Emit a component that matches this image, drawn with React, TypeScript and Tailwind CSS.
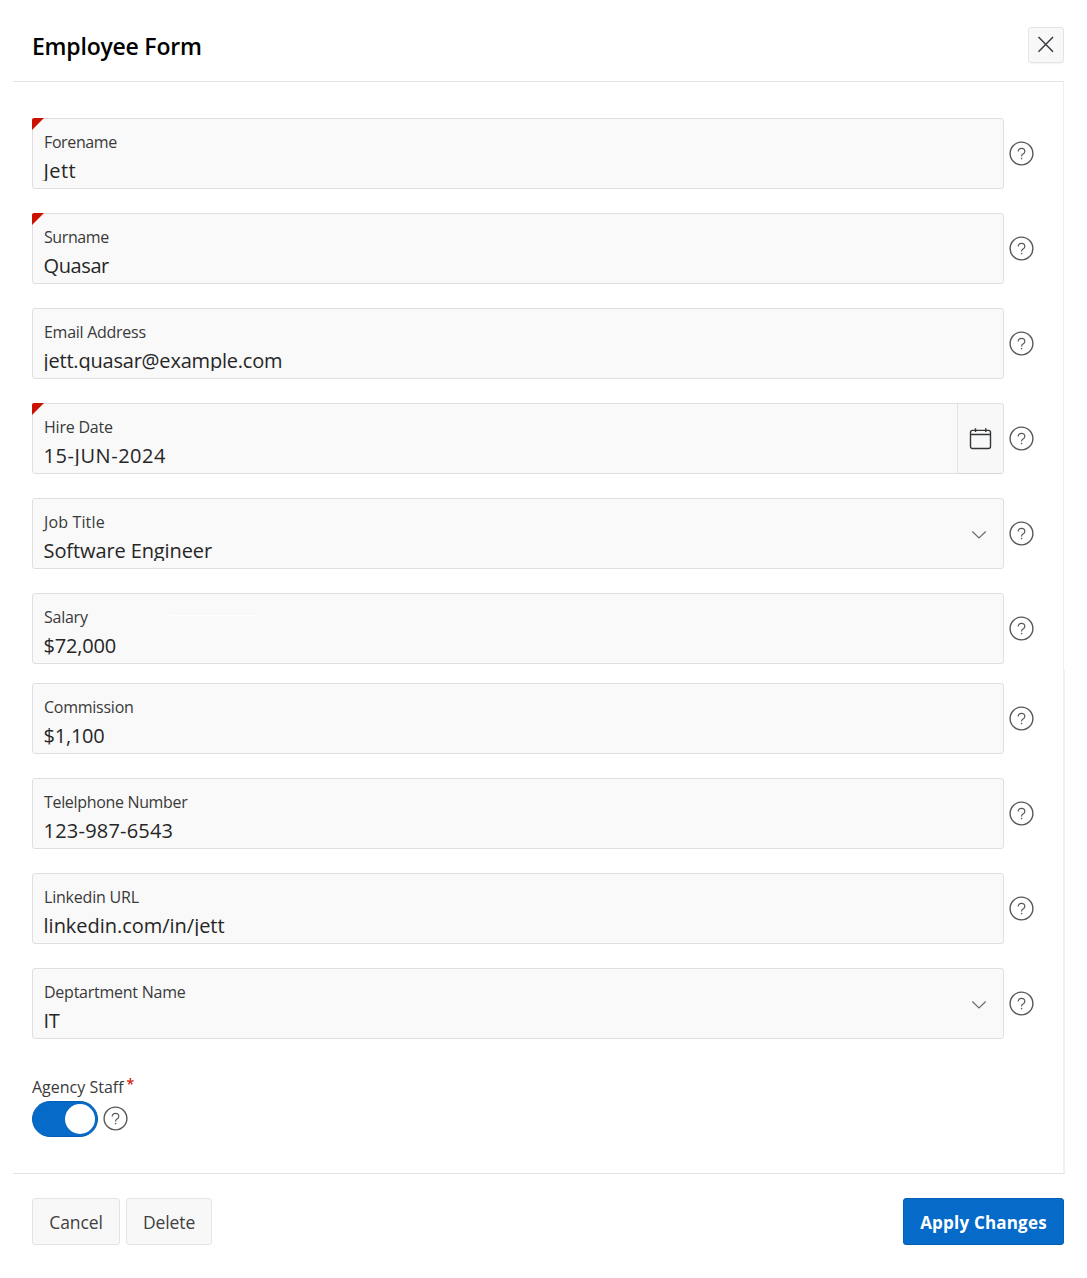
import React from "react";

type FieldProps = {
  label: string;
  value: string;
  labelClass: string;
  valueClass: string;
  required?: boolean;
  kind?: "text" | "date" | "select";
  children?: React.ReactNode;
};

function HelpIcon() {
  return (
    <svg width="26" height="26" viewBox="0 0 26 26" fill="none" stroke="#585858" className="shrink-0">
      <circle cx="12.5" cy="12.5" r="11.4" strokeWidth="1.4" />
      <path d="M9.2 10.6c0-1.9 1.4-3.2 3.2-3.2 1.9 0 3.4 1.2 3.4 3 0 1.5-.9 2.1-1.8 2.7-.9.6-1.4 1-1.4 2v.4" strokeWidth="1.2" />
      <circle cx="12.6" cy="17.6" r="0.8" fill="#585858" stroke="none" />
    </svg>
  );
}

function CalendarIcon() {
  return (
    <svg width="24" height="24" viewBox="0 0 24 24" fill="none" stroke="#333638" strokeWidth="1.4">
      <rect x="1.5" y="3.4" width="20" height="18.1" rx="2" />
      <path d="M1.5 7.5h20M6.500 1.200v3.900M16.800 1.200v3.900" />
    </svg>
  );
}

function Field({ label, value, labelClass, valueClass, required, kind = "text", children }: FieldProps) {
  return (
    <div className="flex items-center gap-[5px]">
      <div className="relative flex h-[71px] w-[972px] rounded-[3px] border border-[#dfdfdf] bg-[#f9f9f9]">
        {required && (
          <svg className="absolute -left-px -top-px" width="12" height="12" viewBox="0 0 12 12">
            <path d="M0 12V2a2 2 0 0 1 2-2h10z" fill="#cb1100" />
          </svg>
        )}
        <div className="flex min-w-0 flex-1 flex-col pl-[11px] pt-[13px]">
          <label className="h-5 whitespace-nowrap text-[16px] leading-5 text-[#3a3a3a]">
            <span className={labelClass}>{label}</span>
          </label>
          <div className="-ml-1 mt-[3px] h-[26px] overflow-hidden whitespace-nowrap pl-[3.6px] text-[20px] leading-8 text-[#262626]">
            <span className={valueClass}>{value}</span>
          </div>
        </div>
        {kind === "date" && (
          <div className="flex w-[46px] items-center justify-center rounded-r-[3px] border-l border-[#e2e2e2] bg-[#f8f8f8] shadow-[0_2px_2px_-1px_rgba(0,0,0,0.04)]">
            <CalendarIcon />
          </div>
        )}
        {kind === "select" && (
          <div className="flex w-[31px] items-center">
            <svg width="16" height="16" viewBox="0 0 16 16" fill="none" stroke="#6b6b6b" strokeWidth="1.2" className="-ml-px mt-[2px]">
              <path d="M1.3 4.5L8 11l6.7-6.5" />
            </svg>
          </div>
        )}
        {children}
      </div>
      <HelpIcon />
    </div>
  );
}

export default function App() {
  return (
    <div className="h-[1278px] w-[1087px] bg-white font-['Open_Sans',sans-serif]">
      <header className="ml-[13px] flex h-[82px] w-[1051px] items-start justify-between border-b border-[#e4e4e4] pl-[19px] pt-[27px]">
        <h1 className="mt-[3px] whitespace-nowrap text-[23px] font-semibold leading-8 tracking-[-0.22px] text-black">Employee Form</h1>
        <button aria-label="Close" className="flex h-9 w-9 items-center justify-center rounded-[3px] border border-[#e4e4e4] bg-[#f8f8f8] shadow-[0_2px_2px_-1px_rgba(0,0,0,0.05)]">
          <svg width="18" height="18" viewBox="0 0 18 18" stroke="#3c3b42" strokeWidth="1.5">
            <path d="M1.5 1l14.5 14.8M16 1l-14.5 14.8" />
          </svg>
        </button>
      </header>
      <main className="flex h-[1091px]">
        <div className="w-[1063px] pl-8 pt-9">
          <div className="flex flex-col gap-6">
            <Field label="Forename" value="Jett" labelClass="tracking-[-0.38px]" valueClass="tracking-[0.4px]" required />
            <Field label="Surname" value="Quasar" labelClass="tracking-[-0.4px]" valueClass="tracking-[-0.42px]" required />
            <Field label="Email Address" value="jett.quasar@example.com" labelClass="tracking-[-0.27px]" valueClass="tracking-[-0.2px]" />
            <Field label="Hire Date" value="15-JUN-2024" labelClass="tracking-[-0.22px]" valueClass="tracking-[0.54px]" required kind="date" />
            <Field label="Job Title" value="Software Engineer" labelClass="tracking-[0.15px]" valueClass="tracking-[-0.11px]" kind="select" />
            <Field label="Salary" value="$72,000" labelClass="tracking-[-0.25px]" valueClass="tracking-[-0.2px]">
              <div className="absolute left-[137px] top-[21px] h-px w-[85px] bg-white" />
            </Field>
          </div>
          <div className="mt-[19px] flex flex-col gap-6">
            <Field label="Commission" value="$1,100" labelClass="tracking-[-0.25px]" valueClass="tracking-[-0.25px]" />
            <Field label="Telelphone Number" value="123-987-6543" labelClass="tracking-[-0.33px]" valueClass="tracking-[0.2px]" />
            <Field label="Linkedin URL" value="linkedin.com/in/jett" labelClass="tracking-[-0.2px]" valueClass="tracking-[-0.03px]" />
            <Field label="Deptartment Name" value="IT" labelClass="tracking-[-0.25px]" valueClass="tracking-[-0.4px]" kind="select" />
          </div>
          <div className="mt-[38px] flex h-6 items-start gap-[3px] text-[#3a3a3a]">
            <label className="whitespace-nowrap text-[16px] leading-5">Agency Staff</label>
            <span className="-mt-[3px] text-[14px] font-semibold leading-5 text-[#d8200f]">*</span>
          </div>
          <div className="flex items-center gap-[5px]">
            <button role="switch" aria-checked="true" className="flex h-9 w-[66px] items-center justify-end rounded-full border border-[#055fb4] bg-[#056ac8] pr-[2px]">
              <span className="h-[30px] w-[30px] rounded-full bg-white" />
            </button>
            <HelpIcon />
          </div>
        </div>
        <div className="flex flex-col">
          <div className="h-[588px] w-px bg-[#efefef]" />
          <div className="w-[2px] flex-1 bg-[#f1f1f1]" />
        </div>
      </main>
      <footer className="ml-[13px] flex w-[1052px] items-start border-t border-[#e4e4e4] pl-[19px] pr-px pt-6">
        <button className="h-[47px] w-[88px] rounded-[3px] border border-[#e4e4e4] bg-[#f8f8f8] pt-[2px] text-[17.5px] tracking-[-0.1px] text-[#404040]">Cancel</button>
        <button className="ml-[6px] h-[47px] w-[86px] rounded-[3px] border border-[#e4e4e4] bg-[#f8f8f8] pt-[2px] text-[17.5px] tracking-[-0.1px] text-[#404040]">Delete</button>
        <button className="ml-auto h-[47px] w-[161px] whitespace-nowrap rounded-[3px] border border-[#055fb4] bg-[#056ac8] pt-[2px] text-[17px] font-bold tracking-[0.2px] text-white">Apply Changes</button>
      </footer>
    </div>
  );
}
